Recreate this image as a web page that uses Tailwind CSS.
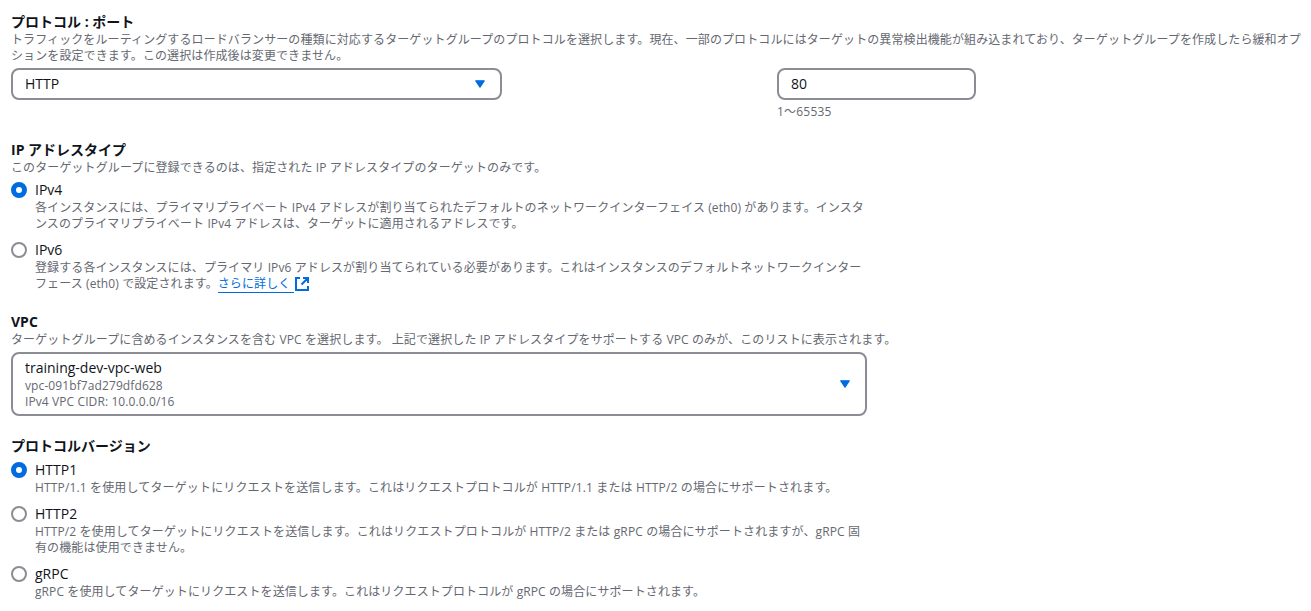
<!DOCTYPE html>
<html lang="ja">
<head>
  <meta charset="UTF-8">
  <meta name="viewport" content="width=device-width, initial-scale=1.0">
  <title>ターゲットグループの作成</title>
  <script src="https://cdn.jsdelivr.net/npm/@tailwindcss/browser@4"></script>
</head>
<body class="bg-white text-[#0f141a] text-sm leading-5 font-['Open_Sans','Noto_Sans_CJK_JP',sans-serif] overflow-hidden">
  <form class="flex flex-col gap-5 pl-[11px] pt-3 whitespace-nowrap">

    <!-- Protocol and port -->
    <section>
      <h2 class="h-5 font-bold">プロトコル : ポート</h2>
      <p class="text-xs leading-4 h-8 text-[#656871] tracking-[0.1px]">トラフィックをルーティングするロードバランサーの種類に対応するターゲットグループのプロトコルを選択します。現在、一部のプロトコルにはターゲットの異常検出機能が組み込まれており、ターゲットグループを作成したら緩和オプ<br>ションを設定できます。この選択は作成後は変更できません。</p>
      <div class="flex items-start gap-[275px] mt-1">
        <div class="flex items-center justify-between w-[491px] h-8 pl-3 pr-[15px] border-2 border-[#8c8c94] rounded-lg">
          <span>HTTP</span>
          <svg class="w-[10px] h-2" viewBox="0 0 10 8"><path d="M.8.8h8.4L5 7.2z" fill="#006ce0" stroke="#006ce0" stroke-width="1.2" stroke-linejoin="round"/></svg>
        </div>
        <div>
          <div class="flex items-center w-[199px] h-8 px-3 border-2 border-[#8c8c94] rounded-lg">80</div>
          <p class="mt-1 h-4 text-xs leading-4 text-[#656871] tracking-[0.2px]">1～65535</p>
        </div>
      </div>
    </section>

    <!-- IP address type -->
    <section>
      <h2 class="h-5 font-bold">IP アドレスタイプ</h2>
      <p class="h-4 text-xs leading-4 text-[#656871] tracking-[0.1px]">このターゲットグループに登録できるのは、指定された IP アドレスタイプのターゲットのみです。</p>
      <div class="flex flex-col gap-2 mt-1">
        <label class="flex gap-2">
          <span class="w-4 h-4 mt-0.5 rounded-full border-5 border-[#006ce0]"></span>
          <span>
            <span class="block h-5">IPv4</span>
            <span class="block h-8 text-xs leading-4 text-[#656871] tracking-[0.1px]">各インスタンスには、プライマリプライベート IPv4 アドレスが割り当てられたデフォルトのネットワークインターフェイス (eth0) があります。インスタ<br>ンスのプライマリプライベート IPv4 アドレスは、ターゲットに適用されるアドレスです。</span>
          </span>
        </label>
        <label class="flex gap-2">
          <span class="w-4 h-4 mt-0.5 rounded-full border-2 border-[#8c8c94]"></span>
          <span>
            <span class="block h-5">IPv6</span>
            <span class="block h-8 text-xs leading-4 text-[#656871] tracking-[0.1px]">登録する各インスタンスには、プライマリ IPv6 アドレスが割り当てられている必要があります。これはインスタンスのデフォルトネットワークインター<br>フェース (eth0) で設定されます。<a href="#" class="inline-flex h-4 text-[#006ce0]"><span class="h-[17px] pr-1 border-b border-[#006ce0]">さらに詳しく</span><svg class="w-4 h-4" viewBox="0 0 16 16" fill="none" stroke="#006ce0" stroke-width="2"><path d="M6 2H2v12h12v-4M9 2h5v5M14 2 7.5 8.5"/></svg></a></span>
          </span>
        </label>
      </div>
    </section>

    <!-- VPC -->
    <section>
      <h2 class="h-5 font-bold">VPC</h2>
      <p class="h-4 text-xs leading-4 text-[#656871] tracking-[0.11px]">ターゲットグループに含めるインスタンスを含む VPC を選択します。 上記で選択した IP アドレスタイプをサポートする VPC のみが、このリストに表示されます。</p>
      <div class="flex items-center justify-between mt-1 w-[856px] h-16 pl-3 pr-[15px] border-2 border-[#8c8c94] rounded-lg">
        <div>
          <p class="h-5">training-dev-vpc-web</p>
          <p class="h-4 text-xs leading-4 text-[#656871] tracking-[0.1px]">vpc-091bf7ad279dfd628</p>
          <p class="h-4 text-xs leading-4 text-[#656871] tracking-[0.1px]">IPv4 VPC CIDR: 10.0.0.0/16</p>
        </div>
        <svg class="w-[10px] h-2" viewBox="0 0 10 8"><path d="M.8.8h8.4L5 7.2z" fill="#006ce0" stroke="#006ce0" stroke-width="1.2" stroke-linejoin="round"/></svg>
      </div>
    </section>

    <!-- Protocol version -->
    <section>
      <h2 class="h-5 font-bold">プロトコルバージョン</h2>
      <div class="flex flex-col gap-2 mt-1">
        <label class="flex gap-2">
          <span class="w-4 h-4 mt-0.5 rounded-full border-5 border-[#006ce0]"></span>
          <span>
            <span class="block h-5">HTTP1</span>
            <span class="block h-4 text-xs leading-4 text-[#656871] tracking-[0.15px]">HTTP/1.1 を使用してターゲットにリクエストを送信します。これはリクエストプロトコルが HTTP/1.1 または HTTP/2 の場合にサポートされます。</span>
          </span>
        </label>
        <label class="flex gap-2">
          <span class="w-4 h-4 mt-0.5 rounded-full border-2 border-[#8c8c94]"></span>
          <span>
            <span class="block h-5">HTTP2</span>
            <span class="block h-8 text-xs leading-4 text-[#656871] tracking-[0.12px]">HTTP/2 を使用してターゲットにリクエストを送信します。これはリクエストプロトコルが HTTP/2 または gRPC の場合にサポートされますが、gRPC 固<br>有の機能は使用できません。</span>
          </span>
        </label>
        <label class="flex gap-2">
          <span class="w-4 h-4 mt-0.5 rounded-full border-2 border-[#8c8c94]"></span>
          <span>
            <span class="block h-5">gRPC</span>
            <span class="block h-4 text-xs leading-4 text-[#656871] tracking-[0.1px]">gRPC を使用してターゲットにリクエストを送信します。これはリクエストプロトコルが gRPC の場合にサポートされます。</span>
          </span>
        </label>
      </div>
    </section>
  </form>
</body>
</html>
